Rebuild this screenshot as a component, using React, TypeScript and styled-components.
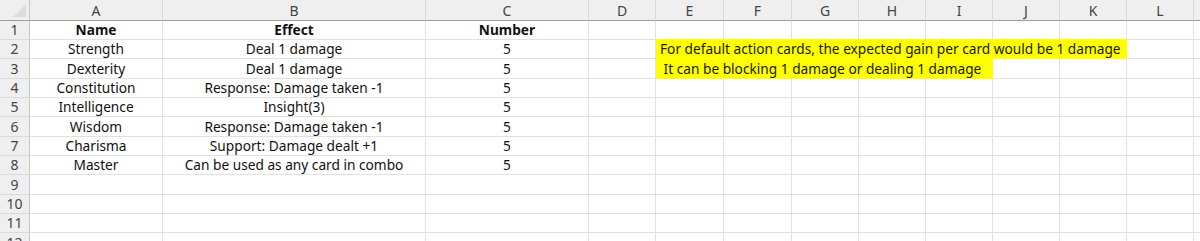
import React from "react";
import styled, { createGlobalStyle } from "styled-components";

const Global = createGlobalStyle`
  html, body { margin: 0; padding: 0; background: #ffffff; }
  body { overflow: hidden; width: 1200px; height: 241px; }
`;

const COLS = [30, 133, 263, 163, 67, 68, 68, 67, 67, 67, 67, 67, 67, 40];
const ROWS = [21, 19, 19, 20, 19, 19, 20, 19, 19, 20, 19, 19, 20];
const LETTERS = ["A", "B", "C", "D", "E", "F", "G", "H", "I", "J", "K", "L", ""];

const Sheet = styled.div`
  display: grid;
  grid-template-columns: ${COLS.map((c) => c + "px").join(" ")};
  grid-template-rows: ${ROWS.map((r) => r + "px").join(" ")};
  font-family: "Noto Sans", "Noto Sans CJK SC", sans-serif;
  font-size: 13.7px;
  color: #111;
  width: 1200px;
  height: 241px;
  overflow: hidden;
`;

const Corner = styled.div`
  box-sizing: border-box;
  background: #efefef;
  border-right: 1px solid #c6c6c6;
  border-bottom: 1px solid #9c9c9c;
  position: relative;
  &::after {
    content: "";
    position: absolute;
    right: 3px;
    bottom: 3px;
    width: 0;
    height: 0;
    border-left: 13px solid transparent;
    border-bottom: 13px solid #dcdcdc;
  }
`;

const ColHead = styled.div`
  box-sizing: border-box;
  background: #efefef;
  border-right: 1px solid #d9d9d9;
  border-bottom: 1px solid #9c9c9c;
  display: flex;
  align-items: flex-end;
  justify-content: center;
  color: #444;
  font-size: 14px;
  line-height: 19px;
`;

const RowHead = styled.div`
  box-sizing: border-box;
  background: #efefef;
  border-right: 1px solid #c6c6c6;
  border-bottom: 1px solid #dadada;
  display: flex;
  align-items: flex-end;
  justify-content: center;
  color: #444;
  font-size: 14px;
  line-height: 18px;
  overflow: hidden;
`;

const Cell = styled.div<{ $bold?: boolean; $align?: string }>`
  box-sizing: border-box;
  border-right: 1px solid #e1e1e1;
  border-bottom: 1px solid #e1e1e1;
  display: flex;
  align-items: flex-end;
  justify-content: ${(p) => p.$align || "center"};
  font-weight: ${(p) => (p.$bold ? 700 : 400)};
  line-height: 18px;
  white-space: pre;
  overflow: visible;
`;

const Highlight = styled.div<{ $span: number }>`
  box-sizing: border-box;
  grid-column: span ${(p) => p.$span};
  background: #ffff00;
  border-right: 1px solid #ffff00;
  border-bottom: 1px solid #ffff00;
  box-shadow: 0 -1px 0 #ffff00;
  display: flex;
  align-items: flex-end;
  padding-left: 4px;
  line-height: 18px;
  white-space: pre;
  color: #1a1a00;
  position: relative;
  z-index: 1;
`;

const data: [string, string, string][] = [
  ["Strength", "Deal 1 damage", "5"],
  ["Dexterity", "Deal 1 damage", "5"],
  ["Constitution", "Response: Damage taken -1", "5"],
  ["Intelligence", "Insight(3)", "5"],
  ["Wisdom", "Response: Damage taken -1", "5"],
  ["Charisma", "Support: Damage dealt +1", "5"],
  ["Master", "Can be used as any card in combo", "5"],
];

const Blank = ({ n }: { n: number }) => (
  <>
    {Array.from({ length: n }).map((_, i) => (
      <Cell key={i} />
    ))}
  </>
);

export default function App() {
  const rows: React.ReactNode[] = [];
  rows.push(
    <React.Fragment key="r1">
      <RowHead>1</RowHead>
      <Cell $bold>Name</Cell>
      <Cell $bold>Effect</Cell>
      <Cell $bold>Number</Cell>
      <Blank n={10} />
    </React.Fragment>
  );
  data.forEach((d, i) => {
    const r = i + 2;
    let tail: React.ReactNode;
    if (r === 2) {
      tail = (
        <>
          <Cell />
          <Highlight $span={7}>
            For default action cards, the expected gain per card would be 1 damage
          </Highlight>
          <Blank n={2} />
        </>
      );
    } else if (r === 3) {
      tail = (
        <>
          <Cell />
          <Highlight $span={5}> It can be blocking 1 damage or dealing 1 damage</Highlight>
          <Blank n={4} />
        </>
      );
    } else {
      tail = <Blank n={10} />;
    }
    rows.push(
      <React.Fragment key={"r" + r}>
        <RowHead>{r}</RowHead>
        <Cell>{d[0]}</Cell>
        <Cell>{d[1]}</Cell>
        <Cell>{d[2]}</Cell>
        {tail}
      </React.Fragment>
    );
  });
  for (let r = 9; r <= 12; r++) {
    rows.push(
      <React.Fragment key={"r" + r}>
        <RowHead>{r}</RowHead>
        <Blank n={13} />
      </React.Fragment>
    );
  }
  return (
    <>
      <Global />
      <Sheet>
        <Corner />
        {LETTERS.map((l, i) => (
          <ColHead key={i}>{l}</ColHead>
        ))}
        {rows}
      </Sheet>
    </>
  );
}
